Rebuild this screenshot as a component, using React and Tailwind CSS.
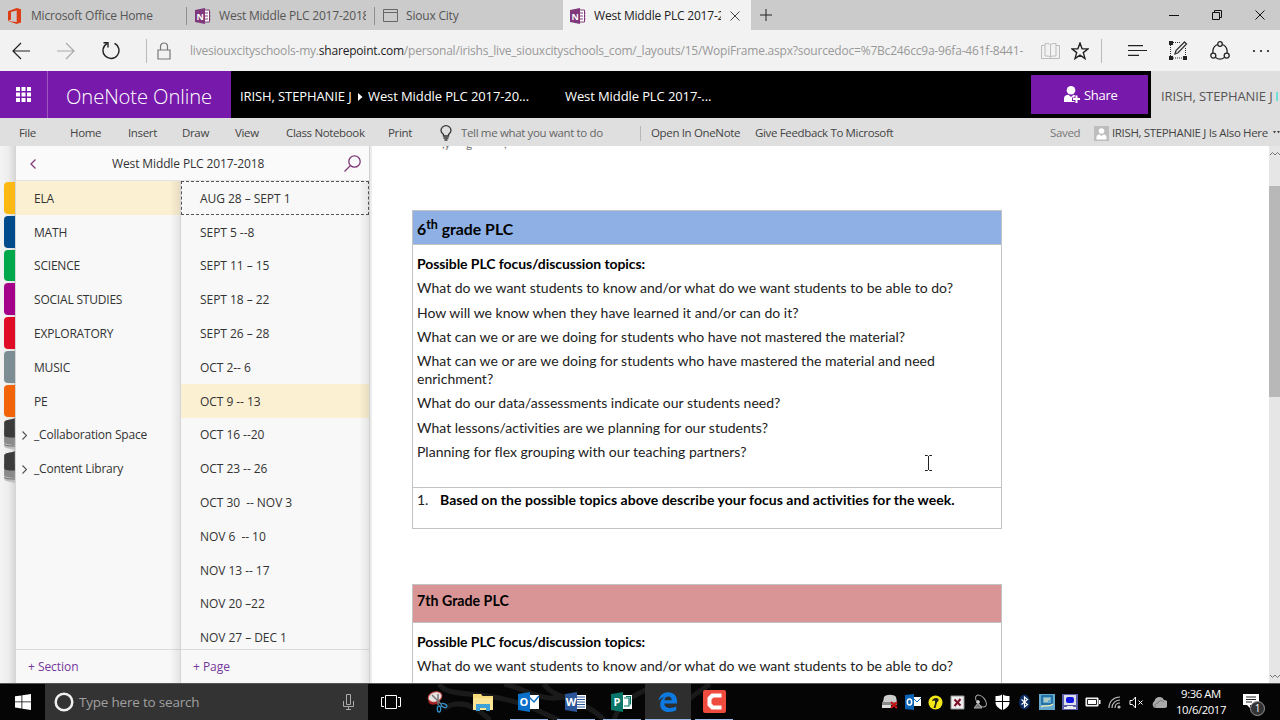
const ribbonItems = [
  { label: "File", width: "w-[51px]" },
  { label: "Home", width: "w-[58px]" },
  { label: "Insert", width: "w-[54px]" },
  { label: "Draw", width: "w-[53px]" },
  { label: "View", width: "w-[51px]" },
  { label: "Class Notebook", width: "w-[102px]" },
  { label: "Print", width: "w-[52px]" },
];

const sections = [
  { name: "ELA", color: "bg-[#fdb913]", active: true },
  { name: "MATH", color: "bg-[#004b8b]" },
  { name: "SCIENCE", color: "bg-[#00a84c]" },
  { name: "SOCIAL STUDIES", color: "bg-[#a4008a]" },
  { name: "EXPLORATORY", color: "bg-[#e00b25]" },
  { name: "MUSIC", color: "bg-[#7c8d93]" },
  { name: "PE", color: "bg-[#f36307]" },
  { name: "_Collaboration Space", group: true },
  { name: "_Content Library", group: true },
];

const pages = [
  "AUG 28 – SEPT 1",
  "SEPT 5 --8",
  "SEPT 11 – 15",
  "SEPT 18 – 22",
  "SEPT 26 – 28",
  "OCT 2-- 6",
  "OCT 9 -- 13",
  "OCT 16 --20",
  "OCT 23 -- 26",
  "OCT 30  -- NOV 3",
  "NOV 6  -- 10",
  "NOV 13 -- 17",
  "NOV 20 –22",
  "NOV 27 – DEC 1",
];

const topics = [
  "What do we want students to know and/or what do we want students to be able to do?",
  "How will we know when they have learned it and/or can do it?",
  "What can we or are we doing for students who have not mastered the material?",
  "What can we or are we doing for students who have mastered the material and need enrichment?",
  "What do our data/assessments indicate our students need?",
  "What lessons/activities are we planning for our students?",
  "Planning for flex grouping with our teaching partners?",
];

function OneNoteIcon() {
  return (
    <svg width="16" height="16" viewBox="0 0 16 16" className="shrink-0">
      <path d="M8 2h6.5v12H8z" fill="#fff" stroke="#80397b" />
      <path d="M10 5h3M10 8h3M10 11h3M14.5 4.8h1M14.5 8h1M14.5 11.2h1" stroke="#80397b" />
      <path d="M0 2 10 0v16L0 14z" fill="#80397b" />
      <text x="1.5" y="11.5" fontSize="9" fontWeight="bold" fill="#fff" fontFamily="Open Sans, sans-serif">N</text>
    </svg>
  );
}

function TabStrip() {
  return (
    <div className="flex h-[30px] bg-[#cbcbcb] text-[12px] tracking-[-0.2px] text-[#555]">
      <div className="flex w-[186px] items-center pt-px pl-[8px]">
        <svg width="13" height="16" viewBox="0 0 13 16">
          <path d="M0 3.3 8.7 0 13 1.3v13.3L8.7 16 0 12.9l8.7 1V2.5L3 3.9v7.6l-3 1.4z" fill="#dc3e15" />
        </svg>
        <span className="ml-[10px] whitespace-nowrap">Microsoft Office Home</span>
      </div>
      <div className="flex w-[188px] items-center pt-px">
        <span className="h-[18px] w-px bg-[#909090]" />
        <span className="ml-[8px] flex"><OneNoteIcon /></span>
        <span className="ml-[8px] w-[147px] overflow-hidden whitespace-nowrap">West Middle PLC 2017-2018</span>
      </div>
      <div className="flex w-[189px] items-center pt-px">
        <span className="h-[18px] w-px bg-[#909090]" />
        <svg width="15" height="13" viewBox="0 0 15 13" className="ml-[8px]" fill="none" stroke="#666">
          <path d="M.5.5h14v12H.5zM.5 3.5h14" />
        </svg>
        <span className="ml-[8px]">Sioux City</span>
      </div>
      <div className="flex w-[188px] items-center bg-[#f2f2f2] pt-px text-[#222]">
        <span className="ml-[7px] flex"><OneNoteIcon /></span>
        <span className="ml-[8px] w-[127px] overflow-hidden whitespace-nowrap">West Middle PLC 2017-2018</span>
        <svg width="10" height="10" viewBox="0 0 10 10" className="ml-[9px]" stroke="#444">
          <path d="M.5.5l9 9M9.500.5l-9 9" />
        </svg>
      </div>
      <div className="flex flex-1 items-center">
        <svg width="12" height="12" viewBox="0 0 12 12" className="ml-[9px]" stroke="#222">
          <path d="M6 0v12M0 6h12" />
        </svg>
        <div className="ml-auto flex items-center pr-[15px]">
          <svg width="10" height="10" viewBox="0 0 10 10" stroke="#111">
            <path d="M0 5.500h10" />
          </svg>
          <svg width="10" height="10" viewBox="0 0 10 10" className="ml-[33px]" fill="none" stroke="#111">
            <path d="M.5 2.500h7v7h-7zM2.500 2.500v-2h7v7h-2" />
          </svg>
          <svg width="10" height="10" viewBox="0 0 10 10" className="ml-[33px]" stroke="#111">
            <path d="M.5.5l9 9M9.500.5l-9 9" />
          </svg>
        </div>
      </div>
    </div>
  );
}

function AddressBar() {
  return (
    <div className="flex h-[41px] items-center bg-[#f2f2f2]">
      <svg width="18" height="18" viewBox="0 0 18 18" className="ml-[12px]" fill="none" stroke="#222" strokeWidth="1.2">
        <path d="M9 1 1 9l8 8M1 9h17" />
      </svg>
      <svg width="18" height="18" viewBox="0 0 18 18" className="ml-[27px]" fill="none" stroke="#aaa" strokeWidth="1.2">
        <path d="M9 1l8 8-8 8M17 9H0" />
      </svg>
      <svg width="18" height="19" viewBox="0 0 18 19" className="ml-[27px]" fill="none" stroke="#222" strokeWidth="1.4">
        <path d="M12.500 2.300a8 8 0 1 1-7.600.3M1.500 1.800h4.500v4.600" />
      </svg>
      <span className="ml-[26px] h-[24px] w-px bg-[#bbb]" />
      <svg width="14" height="18" viewBox="0 0 14 18" className="ml-[10px]" fill="none" stroke="#777" strokeWidth="1.2">
        <path d="M1 8h12v9H1zM3.500 8V4.500a3.500 3.500 0 0 1 7 0V8" />
      </svg>
      <div className="ml-[19px] w-[840px] pt-px whitespace-nowrap text-[12px] tracking-[-0.2px] text-[#999]">
        livesiouxcityschools-my.<span className="text-[#222]">sharepoint.com</span>
        /personal/irishs_live_siouxcityschools_com/_layouts/15/WopiFrame.aspx?sourcedoc=%7Bc246cc9a-96fa-461f-8441-
      </div>
      <svg width="19" height="18" viewBox="0 0 19 18" className="ml-[11px]" fill="none" stroke="#bbb">
        <path d="M9.500 2.500v13M9.500 2.500c-1-1-4-1-5.500-1v12.500c2 0 4.500 0 5.500 1M9.500 2.500c1-1 4-1 5.500-1v12.500c-2 0-4.500 0-5.500 1M4 3.500H.5v13h18v-13H15" />
      </svg>
      <svg width="18" height="18" viewBox="0 0 18 18" className="ml-[11px]" fill="none" stroke="#222" strokeWidth="1.4">
        <path d="M9 1l2.100 5.800 6 .1-4.800 3.700 1.700 6L9 13.100 4 16.600l1.700-6L.9 6.900l6-.1z" />
      </svg>
      <span className="ml-[12px] h-[24px] w-px bg-[#bbb]" />
      <svg width="19" height="11" viewBox="0 0 19 11" className="ml-[26px]" stroke="#222" strokeWidth="1.200">
        <path d="M0 .6h15M0 5.500h19M0 10.400h11" />
      </svg>
      <svg width="19" height="19" viewBox="0 0 19 19" className="ml-[22px]" fill="none" stroke="#333">
        <path d="M4 1.500h8M1.500 4v11M4 17h11M16.500 7v8" strokeDasharray="1 1" />
        <path d="M0 0h4v4H0zM0 15h4v4H0zM14 15h4v4h-4z" fill="#222" stroke="none" />
        <path d="M6 13l1-3.500L15.500 1l2 2L9 11.800z" strokeWidth="1.300" />
      </svg>
      <svg width="20" height="20" viewBox="0 0 20 20" className="ml-[22px]" fill="none" stroke="#222" strokeWidth="1.300">
        <path d="M7.500 3.500C4 5 2.500 8.500 3 12M12.500 3.500c3.500 1.500 5 5 4.500 8.500M5.500 16.500c2.700 2 6.300 2 9 0" />
        <circle cx="10" cy="3" r="2.300" />
        <circle cx="3.300" cy="14.600" r="2.500" />
        <circle cx="16.700" cy="14.600" r="2.500" />
      </svg>
      <svg width="18" height="4" viewBox="0 0 18 4" className="ml-[22px]" fill="#222">
        <circle cx="2" cy="2" r="1.100" />
        <circle cx="9" cy="2" r="1.100" />
        <circle cx="16" cy="2" r="1.100" />
      </svg>
    </div>
  );
}

function SuiteBar() {
  return (
    <div className="flex h-[47px] bg-black text-[13px] tracking-[-0.1px] text-white">
      <div className="flex w-[48px] items-center justify-center border-r border-[#9c56bd] bg-[#7719aa]">
        <svg width="15" height="15" viewBox="0 0 15 15" fill="#fff">
          <path d="M0 0h4v4H0zM5.500 0h4v4h-4zM11 0h4v4h-4zM0 5.500h4v4H0zM5.500 5.500h4v4h-4zM11 5.500h4v4h-4zM0 11h4v4H0zM5.500 11h4v4h-4zM11 11h4v4h-4z" />
        </svg>
      </div>
      <div className="flex w-[183px] items-center whitespace-nowrap bg-[#7719aa] pt-[3px] pl-[18px] text-[20.2px] font-light">
        OneNote Online
      </div>
      <div className="flex w-[800px] items-center pt-[4px] pl-[9px] whitespace-nowrap">
        <span className="w-[118px]">IRISH, STEPHANIE J</span>
        <svg width="5" height="8" viewBox="0 0 5 8" fill="#fff">
          <path d="M0 0l4.500 4L0 8z" />
        </svg>
        <span className="ml-[5px] w-[197px]">West Middle PLC 2017-20...</span>
        <span>West Middle PLC 2017-...</span>
      </div>
      <div className="my-[4px] flex w-[117px] items-center bg-[#7719aa] pl-[33px]">
        <svg width="17" height="17" viewBox="0 0 17 17" fill="#fff">
          <circle cx="7" cy="4.300" r="4.300" />
          <path d="M0 16v-3.500C0 10 2 9 4.500 8.800L7 11l2.500-2.200c1 .1 1.800.4 2.300.8h-1.300v2H8v3.500h2.500V16z" />
          <path d="M11.500 9.500h2v2.500H16v2h-2.500v3h-2v-3H9v-2h2.500z" />
        </svg>
        <span className="ml-[3px] pt-[3px] tracking-[-0.3px]">Share</span>
      </div>
      <div className="ml-[3px] flex flex-1 items-center overflow-hidden bg-[#dfdfdf] pt-[4px] pl-[10px] whitespace-nowrap text-[#555]">
        <span>IRISH, STEPHANIE J</span>
        <span className="ml-[3px] h-[9px] w-[2px] bg-[#6fdfd8]" />
      </div>
    </div>
  );
}

function Ribbon() {
  return (
    <div className="flex h-[28px] items-center overflow-hidden bg-[#dfdfdf] pt-[2px] pl-[19px] text-[11.5px] tracking-[-0.35px] whitespace-nowrap text-[#444]">
      {ribbonItems.map((item) => (
        <span key={item.label} className={`${item.width} shrink-0`}>{item.label}</span>
      ))}
      <svg width="12" height="16" viewBox="0 0 12 16" className="shrink-0" fill="none" stroke="#333" strokeWidth="1.300">
        <path d="M3.500 11V9.500C2.500 8.500 1 7.500 1 5.500a5 4.800 0 0 1 10 0c0 2-1.500 3-2.500 4V11zM3.500 13h5M4.500 15h3" />
      </svg>
      <span className="ml-[9px] w-[179px] shrink-0 text-[#666]">Tell me what you want to do</span>
      <span className="h-[15px] w-px shrink-0 bg-[#b8b8b8]" />
      <span className="ml-[10px] w-[104px] shrink-0">Open In OneNote</span>
      <span className="w-[295px] shrink-0">Give Feedback To Microsoft</span>
      <span className="w-[44px] shrink-0 text-[#777]">Saved</span>
      <svg width="15" height="15" viewBox="0 0 15 15" className="shrink-0">
        <path d="M0 0h15v15H0z" fill="#bdbdbd" />
        <circle cx="7.500" cy="5" r="2.800" fill="#fff" />
        <path d="M2.500 13.500V11c0-2 2-2.500 3-2.500L7.500 10l2-1.500c1 0 3 .5 3 2.500v2.500z" fill="#fff" />
      </svg>
      <span className="ml-[3px] w-[161px] shrink-0">IRISH, STEPHANIE J Is Also Here</span>
      <svg width="7" height="4" viewBox="0 0 7 4" className="shrink-0" fill="#444">
        <path d="M0 0h3L1.500 2.500zM4 0h3L5.500 2.500z" />
      </svg>
    </div>
  );
}

function SectionTab({ section }) {
  if (section.group) {
    return (
      <div className="h-[33.8px]">
        <svg width="11" height="33" viewBox="0 0 11 34" className="block">
          <path d="M11 13H0v15c0 3 3 3 5 3.500l6 1.500z" fill="#bcbcbc" />
          <path d="M11 13H0v11c0 3 3 3 5 3l6 1z" fill="#8a8a8a" />
          <path d="M0 27c1 2 6 1.500 11 2" stroke="#666" fill="none" />
          <path d="M11 0C9 2 2 1 0 4v13c0 3 4 3 6 3h5z" fill="#3b3b3b" />
        </svg>
      </div>
    );
  }
  return (
    <div className="h-[33.8px] py-[1px]">
      <div className={`${section.color} h-full w-[11px] rounded-l-[4px]`} />
    </div>
  );
}

function EdgeShade() {
  return (
    <div className="absolute inset-y-0 right-0 w-[10px] bg-gradient-to-r from-transparent to-black/8" />
  );
}

function Sidebar() {
  return (
    <div className="flex h-full w-[372px] shrink-0 bg-[#f1f1f2]">
      <div className="flex w-[16px] shrink-0 flex-col items-end bg-gradient-to-r from-[#f4f4f5] via-[#eeeeef] to-[#d4d4d4] pt-[35px] pr-px">
        {sections.map((section) => (
          <SectionTab key={section.name} section={section} />
        ))}
      </div>
      <div className="flex w-[354px] flex-col border-r border-[#d0d0d0] bg-[#f8f8f8] text-[12px] tracking-[-0.2px] text-[#333]">
        <div className="flex h-[35px] shrink-0 items-center border-b border-[#e3e3e3] bg-[#fafafa] pt-px">
          <svg width="6" height="10" viewBox="0 0 6 10" className="ml-[14px]" fill="none" stroke="#80397b" strokeWidth="1.300">
            <path d="M5.500.5 1 5l4.500 4.500" />
          </svg>
          <span className="ml-[76px] w-[232px] tracking-[-0.12px] whitespace-nowrap">West Middle PLC 2017-2018</span>
          <svg width="17" height="17" viewBox="0 0 17 17" fill="none" stroke="#80397b" strokeWidth="1.300">
            <circle cx="10.500" cy="6.500" r="5.700" />
            <path d="M6.500 10.500.5 16.500" />
          </svg>
        </div>
        <div className="flex min-h-0 flex-1">
          <div className="relative flex w-[165px] flex-col border-r border-[#d5d5d5]">
            <div className="flex-1">
              {sections.map((section) => (
                <div
                  key={section.name}
                  className={`${section.active ? "bg-[#fcf0d2]" : ""} flex h-[33.8px] items-center pt-[2px]`}
                >
                  <span className="w-[18px] pl-[6px]">
                    {section.group && (
                      <svg width="5" height="9" viewBox="0 0 5 9" fill="none" stroke="#555" strokeWidth="1.200">
                        <path d="M.5.500l4 4-4 4" />
                      </svg>
                    )}
                  </span>
                  <span className="whitespace-nowrap">{section.name}</span>
                </div>
              ))}
            </div>
            <div className="flex h-[34px] items-center border-t border-[#dcdcdc] pt-[1px] pl-[12px] tracking-[-0.05px] text-[#74379c]">+ Section</div>
            <EdgeShade />
          </div>
          <div className="relative flex min-w-0 flex-1 flex-col tracking-[-0.05px]">
            <div className="flex-1 overflow-hidden">
              {pages.map((page, i) => (
                <div
                  key={page}
                  className={`${i === 0 ? "border border-dashed border-[#555] pl-[18px]" : "pl-[19px]"} ${i === 6 ? "bg-[#fcf0d2]" : ""} flex h-[33.8px] items-center pt-[2px] whitespace-pre`}
                >
                  {page}
                </div>
              ))}
            </div>
            <div className="flex h-[34px] shrink-0 items-center border-t border-[#dcdcdc] pt-[1px] pl-[12px] text-[#74379c]">+ Page</div>
            <EdgeShade />
          </div>
        </div>
      </div>
      <div className="w-[2px] bg-[#ececec]" />
    </div>
  );
}

function Topics() {
  return (
    <>
      <p className="mb-[6.3px] font-bold tracking-[-0.08px] text-black">Possible PLC focus/discussion topics:</p>
      {topics.map((topic) => (
        <p key={topic} className="mb-[6.3px] w-[540px] tracking-[0.01px]">{topic}</p>
      ))}
    </>
  );
}

function Document() {
  return (
    <div className="relative flex-1 overflow-hidden bg-white pl-[40px] font-[Lato,sans-serif] text-[14px] leading-[18px] text-[#222] [font-variant-ligatures:none]">
      <div className="h-[64px] overflow-hidden pl-[30px]">
        <p className="-mt-[10px] flex text-[12px] leading-[16px] text-[#777]">
          <span className="w-[24px]">,y</span>
          <span className="w-[38px]">g</span>
          <span>,</span>
        </p>
      </div>
      <div className="w-[590px] border border-[#c3c3c3]">
        <div className="flex h-[34px] items-center border-b border-[#c3c3c3] bg-[#8eb0e4] pt-[3px] pl-[4px] text-[15.8px] font-bold text-black">
          <span>6<sup className="text-[12.500px]">th</sup> grade PLC</span>
        </div>
        <div className="h-[243px] border-b border-[#c3c3c3] pt-[10px] pl-[4px]">
          <Topics />
        </div>
        <div className="flex h-[40px] pt-[3px] pl-[4px]">
          <span className="w-[23px]">1.</span>
          <span className="font-bold tracking-[0.03px] whitespace-nowrap text-black">
            Based on the possible topics above describe your focus and activities for the week.
          </span>
        </div>
      </div>
      <div className="mt-[55px] w-[590px] border border-[#c3c3c3]">
        <div className="h-[38px] border-b border-[#c3c3c3] bg-[#d99496] pt-[7px] pl-[4px] text-[14.200px] font-bold text-black">
          7th Grade PLC
        </div>
        <div className="h-[243px] pt-[10px] pl-[4px]">
          <Topics />
        </div>
      </div>
      <svg width="7" height="16" viewBox="0 0 7 16" className="absolute top-[309px] left-[553px]" fill="none" stroke="#222">
        <path d="M0 .5h2.500l1 1 1-1H7M3.500 1v14M0 15.500h2.500l1-1 1 1H7" />
      </svg>
    </div>
  );
}

function Scrollbar() {
  return (
    <div className="flex w-[11px] shrink-0 flex-col items-center bg-[#e6e6e6]">
      <div className="h-[40px] pt-[5px]">
        <svg width="10" height="5" viewBox="0 0 10 5" fill="none" stroke="#777">
          <path d="M0 4l2.500-2.500L5 4l2.500-2.500L10 4" />
        </svg>
      </div>
      <div className="h-[211px] w-full bg-[#b8b8b8]" />
      <div className="mt-auto pb-[4px]">
        <svg width="10" height="5" viewBox="0 0 10 5" fill="none" stroke="#777">
          <path d="M0 1l2.500 2.500L5 1l2.500 2.500L10 1" />
        </svg>
      </div>
    </div>
  );
}

function OfficeTile({ letter, color, children }) {
  return (
    <svg width="22" height="20" viewBox="0 0 22 20">
      <path d="M11 3h10v14H11z" fill="#fff" />
      {children}
      <path d="M0 2 12 0v20L0 18z" fill={color} />
      <text x="6" y="14" textAnchor="middle" fontSize="11" fontWeight="bold" fill="#fff" fontFamily="Open Sans, sans-serif">
        {letter}
      </text>
    </svg>
  );
}

function TaskButton({ running, active, children }) {
  return (
    <div className={`${active ? "bg-[#2e2e2e]" : ""} flex h-full w-[46.2px] flex-col items-center`}>
      <div className="flex flex-1 items-center">{children}</div>
      <div className={`${running ? "bg-[#9bb8e6]" : ""} ${active ? "w-full" : "w-[38px]"} h-px`} />
    </div>
  );
}

function Tray() {
  return (
    <div className="ml-auto flex items-center gap-[7px] pr-[14px]">
      <svg width="16" height="16" viewBox="0 0 16 16">
        <path d="M2 3c2-3 10-3 12 0l1 5H1z" fill="#ccc" />
        <path d="M0 8h15v3H0z" fill="#888" />
        <path d="M0 11h9v3H0z" fill="#ddd" />
        <path d="M9 8l6 6M15 8l-6 6" stroke="#cc1111" strokeWidth="2" />
      </svg>
      <svg width="16" height="16" viewBox="0 0 16 16">
        <path d="M8 3h8v9H8z" fill="#fff" />
        <path d="M8 4l4 4 4-4" stroke="#0a64b8" fill="none" />
        <path d="M0 1 9 0v16l-9-1z" fill="#0a64b8" />
        <ellipse cx="4.500" cy="8" rx="2.200" ry="3" fill="none" stroke="#fff" strokeWidth="1.500" />
      </svg>
      <svg width="15" height="15" viewBox="0 0 15 15">
        <circle cx="7.500" cy="7.500" r="7" fill="#f5e616" />
        <path d="M4 6c.5-3 5-4 6.500-2 .5 1.500-.5 2.500-1.500 3.500L7.500 13H5.500L7 8.500V5.500z" fill="#222" />
      </svg>
      <svg width="15" height="15" viewBox="0 0 15 15">
        <path d="M1 1h13v13H1z" fill="#eee" stroke="#999" />
        <path d="M4.500 4.500l6 6M10.500 4l-6 7" stroke="#7d1026" strokeWidth="2" />
      </svg>
      <svg width="16" height="16" viewBox="0 0 16 16" fill="none" stroke="#aaa">
        <ellipse cx="9" cy="7" rx="4" ry="7" transform="rotate(-40 9 7)" />
        <circle cx="6" cy="8" r="1.500" fill="#ddd" />
        <path d="M6 9l-4 5h8z" fill="#777" />
      </svg>
      <svg width="15" height="16" viewBox="0 0 15 16">
        <path d="M7.500 0c2 2 4.500 2 7 2v6c0 4-3 6.500-7 8-4-1.500-7-4-7-8V2c2.500 0 5 0 7-2z" fill="#fff" />
        <path d="M7.500 0v16M0 7.500h15" stroke="#000" />
      </svg>
      <svg width="15" height="16" viewBox="0 0 15 16" fill="none">
        <ellipse cx="7.500" cy="8" rx="5.500" ry="7.500" fill="#0b2c63" />
        <path d="M4.500 5.500l6 5-3 2.500V3l3 2.500-6 5" stroke="#fff" strokeWidth="1.200" />
      </svg>
      <svg width="16" height="16" viewBox="0 0 16 16" fill="none">
        <path d="M0 0h16v16H0z" fill="#66a9cf" />
        <path d="M3 2h10v8H3z" stroke="#136298" strokeWidth="1.500" />
        <path d="M5 5h6M5 7h4M2 13c4-3 8 1 12-3" stroke="#f2edb4" strokeWidth="1.200" />
      </svg>
      <svg width="16" height="16" viewBox="0 0 16 16">
        <path d="M0 0h16v16H0z" fill="#5960a8" />
        <path d="M2 1h12v10H2z" fill="#dedee8" />
        <rect x="4" y="3" width="8" height="6" rx="2" fill="#1016dc" />
        <path d="M5 12h6v1h3v2H2v-2h3z" fill="#eee" />
      </svg>
      <svg width="16" height="10" viewBox="0 0 16 10">
        <path d="M1 1h12v8H1z" fill="#ddd" stroke="#fff" />
        <path d="M2.500 2.500h9v5h-9z" fill="#fff" stroke="#222" />
        <path d="M14 3h1.500v4H14z" fill="#fff" />
      </svg>
      <svg width="14" height="14" viewBox="0 0 14 14" fill="none" stroke="#bbb" strokeWidth="1.200">
        <path d="M1 13C1 6 6 2 12 2M4 13c0-5 4-8 8-8M7 13c0-3 2-5 5-5" />
        <circle cx="11" cy="12" r="1" fill="#ddd" />
      </svg>
      <svg width="15" height="13" viewBox="0 0 15 13" fill="none" stroke="#fff">
        <path d="M1 4.500h2.500l3-3.500v11l-3-3.500H1zM9.500 4.500l4 4M13.500 4.500l-4 4" />
      </svg>
      <svg width="16" height="12" viewBox="0 0 16 12">
        <path d="M4 12a4 4 0 0 1-.5-7A5 5 0 0 1 13 4a4 4 0 0 1 0 8z" fill="#aaa" />
        <path d="M5 12c-2-2-1-5 2-5 1-3 4-3 6-1" fill="none" stroke="#777" />
      </svg>
      <div className="ml-[1px] w-[52px] text-center text-[11.300px] leading-[16px] tracking-[-0.4px] whitespace-nowrap text-white">
        <div>9:36 AM</div>
        <div>10/6/2017</div>
      </div>
      <div className="relative ml-[9px] h-[23px] w-[23px]">
        <svg width="16" height="16" viewBox="0 0 16 16" className="mt-[3px]">
          <path d="M0 0h16v11H7v3l-3-3H0z" fill="#fff" />
          <path d="M3 3h10M3 5.500h10M3 8h6" stroke="#222" />
        </svg>
        <span className="absolute top-[10px] left-[7px] flex h-[15px] w-[15px] items-center justify-center rounded-full border border-[#999] bg-[#333] text-[10px] text-white">
          1
        </span>
      </div>
    </div>
  );
}

function Taskbar() {
  return (
    <div className="flex h-[37px] items-stretch border-t border-[#555] bg-[#050505]">
      <div className="flex w-[45px] items-center justify-center">
        <svg width="16" height="16" viewBox="0 0 16 16" fill="#fff">
          <path d="M0 2.300 6.500 1.400v6.100H0zM7.300 1.300 16 0v7.500H7.300zM0 8.300h6.500v6.200L0 13.600zM7.300 8.300H16V16l-8.700-1.300z" />
        </svg>
      </div>
      <div className="flex w-[323px] items-center bg-[#333] pl-[9px]">
        <svg width="20" height="20" viewBox="0 0 20 20" fill="none">
          <circle cx="10" cy="10" r="8.300" stroke="#f0f0f0" strokeWidth="2.500" />
        </svg>
        <span className="ml-[5px] w-[264px] pt-px text-[13.500px] tracking-[-0.2px] text-[#a0a0a0]">Type here to search</span>
        <svg width="11" height="16" viewBox="0 0 11 16" fill="none" stroke="#aaa">
          <path d="M3.500.5h4v10h-4zM.5 7v5.500h10V7M5.500 12.500v3M3 15.500h5" />
        </svg>
      </div>
      <div className="flex w-[46px] items-center justify-center">
        <svg width="20" height="14" viewBox="0 0 20 14" fill="none" stroke="#fff">
          <path d="M4.500.5h11v13h-11zM3 2.500H.5v9H3M17 2.500h2.500v9H17" />
        </svg>
      </div>
      <div className="relative flex">
        {/* faint wallpaper swirls showing through the bar */}
        <svg width="320" height="36" viewBox="0 0 320 36" className="absolute inset-0" fill="none" stroke="#1a1a1a" strokeWidth="5">
          <path d="M25 0c8 12 30 8 60 14s40 14 60 22M90 0c20 4 40 20 62 12M130 0c10 16 40 14 60 36M200 36c6-20 20-24 44-36M262 36c0-14 14-22 34-36M30 24c14-8 30-4 46 12" />
        </svg>
        <div className="relative flex">
          <TaskButton>
            <svg width="21" height="22" viewBox="0 0 21 22" fill="none">
              <ellipse cx="8" cy="6" rx="7" ry="5" fill="#e9e2e2" stroke="#c44c4c" transform="rotate(-20 8 6)" />
              <path d="M2 10c2 4 8 3 10 0" stroke="#a22" strokeWidth="2" />
              <path d="M5 4l9 9M11 3v11" stroke="#777" strokeWidth="1.500" />
              <ellipse cx="12" cy="18" rx="1.700" ry="3" stroke="#3590c7" strokeWidth="1.300" />
              <ellipse cx="17" cy="14.500" rx="3" ry="1.700" stroke="#3590c7" strokeWidth="1.300" transform="rotate(25 17 14.500)" />
            </svg>
          </TaskButton>
          <TaskButton>
            <svg width="20" height="18" viewBox="0 0 20 18">
              <path d="M0 1h8l1.500 2H20v14H0z" fill="#f6d978" />
              <path d="M0 5h20v12H0z" fill="#fbe595" />
              <path d="M3 11h14v7h-4v-3H7v3H3z" fill="#3ea2d9" />
            </svg>
          </TaskButton>
          <TaskButton running>
            <OfficeTile letter="O" color="#0a6fc8">
              <path d="M11 5l5 5 5-6" stroke="#0a6fc8" strokeWidth="1.500" fill="none" />
            </OfficeTile>
          </TaskButton>
          <TaskButton running>
            <OfficeTile letter="W" color="#2a5699">
              <path d="M12 5h8M12 7.500h8M12 10h8M12 12.500h8M12 15h8" stroke="#2a5699" />
            </OfficeTile>
          </TaskButton>
          <TaskButton running>
            <OfficeTile letter="P" color="#077568">
              <path d="M13 6h5v8h-5M15 4.500h4.500v8" stroke="#077568" strokeWidth="1.200" fill="none" />
            </OfficeTile>
          </TaskButton>
          <TaskButton running active>
            <svg width="20" height="20" viewBox="0 0 20 20">
              <path
                d="M.5 9C1.500 3.500 5 .3 10.200.3c5.600 0 8.800 3.800 8.800 9v2.200H6.300c.1 3 2.600 4.500 5.700 4.500 2.300 0 4.400-.6 6.200-1.700v4c-2 1.100-4.500 1.700-7.200 1.700-5.300 0-8.800-3-8.800-7.600 0-3.200 1.700-6 4.600-7.400C4 5.500 2 6.800.5 9zm5.900-.7h7.300c0-2.500-1.200-3.900-3.500-3.900-2 0-3.400 1.500-3.800 3.900z"
                fill="#0c7ae0"
              />
            </svg>
          </TaskButton>
          <TaskButton running>
            <svg width="23" height="23" viewBox="0 0 23 23">
              <rect width="23" height="23" rx="2" fill="#ef4b3e" />
              <path d="M18.500 3.500H8.500l-4 4v8l4 4h10v-4h-8L8.500 13.500v-4l2-2h8z" fill="#fff" />
            </svg>
          </TaskButton>
        </div>
      </div>
      <Tray />
    </div>
  );
}

export default function App() {
  return (
    <div className="flex h-[720px] w-[1280px] flex-col overflow-hidden bg-white font-['Open_Sans',sans-serif]">
      <TabStrip />
      <AddressBar />
      <SuiteBar />
      <Ribbon />
      <div className="flex min-h-0 flex-1">
        <Sidebar />
        <Document />
        <Scrollbar />
      </div>
      <Taskbar />
    </div>
  );
}
